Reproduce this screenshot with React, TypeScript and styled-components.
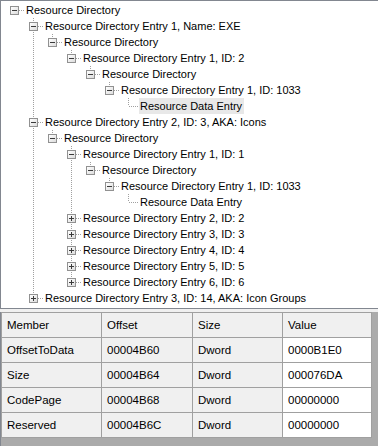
import { Fragment } from 'react';
import styled, { createGlobalStyle } from 'styled-components';

type TreeNode = {
  label: string;
  children?: TreeNode[];
  collapsed?: boolean;
  selected?: boolean;
};

type FlatRow = {
  label: string;
  level: number;
  guides: boolean[];
  hasNext: boolean;
  isFirst: boolean;
  expander: 'none' | 'open' | 'closed';
  selected: boolean;
};

const dataEntry = (selected = false): TreeNode => ({ label: 'Resource Data Entry', selected });

const collapsedEntry = (n: number): TreeNode => ({
  label: `Resource Directory Entry ${n}, ID: ${n}`,
  children: [],
  collapsed: true,
});

const tree: TreeNode[] = [
  {
    label: 'Resource Directory',
    children: [
      {
        label: 'Resource Directory Entry 1, Name: EXE',
        children: [
          {
            label: 'Resource Directory',
            children: [
              {
                label: 'Resource Directory Entry 1, ID: 2',
                children: [
                  {
                    label: 'Resource Directory',
                    children: [
                      {
                        label: 'Resource Directory Entry 1, ID: 1033',
                        children: [dataEntry(true)],
                      },
                    ],
                  },
                ],
              },
            ],
          },
        ],
      },
      {
        label: 'Resource Directory Entry 2, ID: 3, AKA: Icons',
        children: [
          {
            label: 'Resource Directory',
            children: [
              {
                label: 'Resource Directory Entry 1, ID: 1',
                children: [
                  {
                    label: 'Resource Directory',
                    children: [
                      {
                        label: 'Resource Directory Entry 1, ID: 1033',
                        children: [dataEntry()],
                      },
                    ],
                  },
                ],
              },
              collapsedEntry(2),
              collapsedEntry(3),
              collapsedEntry(4),
              collapsedEntry(5),
              collapsedEntry(6),
            ],
          },
        ],
      },
      {
        label: 'Resource Directory Entry 3, ID: 14, AKA: Icon Groups',
        children: [],
        collapsed: true,
      },
    ],
  },
];

// walk the tree into visible rows, remembering which ancestor columns still need a guide line
const flatten = (nodes: TreeNode[], level = 0, guides: boolean[] = []): FlatRow[] =>
  nodes.flatMap((node, i) => {
    const hasNext = i < nodes.length - 1;
    const row: FlatRow = {
      label: node.label,
      level,
      guides,
      hasNext,
      isFirst: level === 0 && i === 0,
      expander: node.children ? (node.collapsed ? 'closed' : 'open') : 'none',
      selected: !!node.selected,
    };
    const kids =
      node.children && !node.collapsed ? flatten(node.children, level + 1, [...guides, hasNext]) : [];
    return [row, ...kids];
  });

const members = [
  { member: 'OffsetToData', offset: '00004B60', size: 'Dword', value: '0000B1E0' },
  { member: 'Size', offset: '00004B64', size: 'Dword', value: '000076DA' },
  { member: 'CodePage', offset: '00004B68', size: 'Dword', value: '00000000' },
  { member: 'Reserved', offset: '00004B6C', size: 'Dword', value: '00000000' },
];

const GlobalStyle = createGlobalStyle`
  html, body {
    margin: 0;
    padding: 0;
    background: #f0f0f0;
  }
  body {
    font-family: 'Liberation Sans', Arial, sans-serif;
    font-size: 11px;
    color: #000;
  }
`;

const Window = styled.div`
  width: 378px;
  height: 446px;
  display: flex;
  flex-direction: column;
  background: #f0f0f0;
  overflow: hidden;
`;

const TreePanel = styled.div`
  height: 306px;
  flex: none;
  background: #fff;
  border: 1px solid #828790;
  border-right: none;
  padding-top: 1px;
  overflow: hidden;
`;

const Splitter = styled.div`
  height: 3px;
  flex: none;
`;

const TreeRow = styled.div`
  display: flex;
  align-items: center;
  height: 16px;
  padding-left: 4px;
  white-space: nowrap;
`;

const Label = styled.span<{ $selected?: boolean }>`
  margin-left: 1px;
  padding: 0 2px 0 1px;
  line-height: 16px;
  background: ${({ $selected }) => ($selected ? '#e8e8e8' : 'transparent')};
`;

const GutterSvg = styled.svg`
  flex: none;
  display: block;
`;

const DOT = '#a0a0a0';

const Gutter = ({ row, level }: { row: FlatRow; level: number }) => {
  const own = level === row.level;
  const full = !own && row.guides[level];
  return (
    <GutterSvg width={19} height={16} viewBox="0 0 19 16" shapeRendering="crispEdges">
      {full && <line x1={9.5} y1={0} x2={9.5} y2={16} stroke={DOT} strokeDasharray="1 1" />}
      {own && (
        <>
          {!row.isFirst && <line x1={9.5} y1={0} x2={9.5} y2={8} stroke={DOT} strokeDasharray="1 1" />}
          {row.hasNext && <line x1={9.5} y1={8} x2={9.5} y2={16} stroke={DOT} strokeDasharray="1 1" />}
          <line x1={10} y1={8.5} x2={19} y2={8.5} stroke={DOT} strokeDasharray="1 1" />
          {row.expander !== 'none' && (
            <>
              <rect x={5.5} y={4.5} width={8} height={8} fill="#fff" stroke="#919191" />
              <rect x={6} y={5} width={7} height={7} fill="url(#boxfill)" />
              <line x1={7} y1={8.5} x2={12} y2={8.5} stroke="#3a3a3a" />
              {row.expander === 'closed' && (
                <line x1={9.5} y1={6} x2={9.5} y2={11} stroke="#3a3a3a" />
              )}
            </>
          )}
        </>
      )}
    </GutterSvg>
  );
};

const GridArea = styled.div`
  flex: 1;
  background: #ababab;
  border-left: 1px solid #828790;
  display: flex;
  align-items: flex-start;
`;

const Grid = styled.div`
  display: grid;
  grid-template-columns: 100px 91px 90px 89px;
  border-top: 1px solid #a0a0a0;
  border-left: 1px solid #a0a0a0;
`;

const Cell = styled.div<{ $white?: boolean }>`
  height: 24px;
  display: flex;
  align-items: center;
  padding-left: 5px;
  border-right: 1px solid #a0a0a0;
  border-bottom: 1px solid #a0a0a0;
  background: ${({ $white }) => ($white ? '#fff' : '#f0f0f0')};
  font-size: 11.5px;
  white-space: nowrap;
`;

export default function App() {
  const rows = flatten(tree);
  return (
    <Window>
      <GlobalStyle />
      <svg width={0} height={0} style={{ position: 'absolute' }}>
        <defs>
          <linearGradient id="boxfill" x1="0" y1="0" x2="1" y2="1">
            <stop offset="0" stopColor="#ffffff" />
            <stop offset="1" stopColor="#dcdcdc" />
          </linearGradient>
        </defs>
      </svg>
      <TreePanel>
        {rows.map((row, i) => (
          <TreeRow key={i}>
            {Array.from({ length: row.level + 1 }, (_, l) => (
              <Gutter key={l} row={row} level={l} />
            ))}
            <Label $selected={row.selected}>{row.label}</Label>
          </TreeRow>
        ))}
      </TreePanel>
      <Splitter />
      <GridArea>
        <Grid>
          <Cell>Member</Cell>
          <Cell>Offset</Cell>
          <Cell>Size</Cell>
          <Cell>Value</Cell>
          {members.map(m => (
            <Fragment key={m.member}>
              <Cell>{m.member}</Cell>
              <Cell>{m.offset}</Cell>
              <Cell>{m.size}</Cell>
              <Cell $white>{m.value}</Cell>
            </Fragment>
          ))}
        </Grid>
      </GridArea>
    </Window>
  );
}
